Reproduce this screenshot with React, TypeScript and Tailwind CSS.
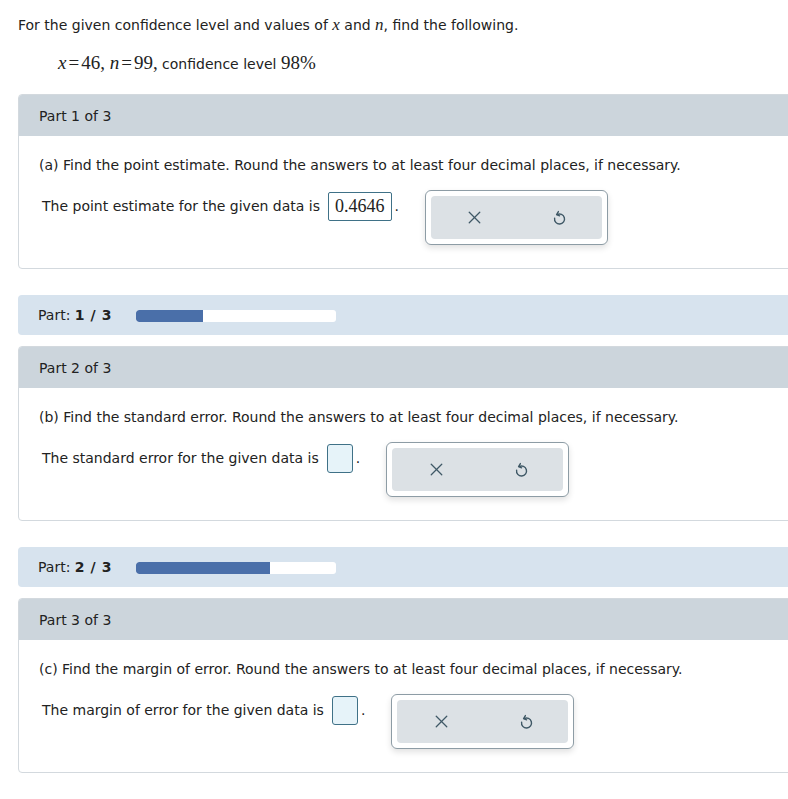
import { X } from "lucide-react";

const parts = [
  {
    n: 1,
    question: "(a) Find the point estimate. Round the answers to at least four decimal places, if necessary.",
    label: "The point estimate for the given data is",
    value: "0.4646",
  },
  {
    n: 2,
    question: "(b) Find the standard error. Round the answers to at least four decimal places, if necessary.",
    label: "The standard error for the given data is",
    value: "",
  },
  {
    n: 3,
    question: "(c) Find the margin of error. Round the answers to at least four decimal places, if necessary.",
    label: "The margin of error for the given data is",
    value: "",
  },
];

function UndoIcon() {
  return (
    <svg width="14" height="16" viewBox="0 0 14 16" fill="none" stroke="#3f5866" strokeWidth="1.4" strokeLinecap="round" strokeLinejoin="round">
      <path d="M5.2 4.6 A5 5 0 1 1 2.6 8.2" />
      <path d="M6.4 1.6 L4.6 4.6 L7.6 5.8" />
    </svg>
  );
}

function ActionBox() {
  return (
    <div className="ml-[26px] -mt-[2px] w-[183px] h-[55px] rounded-[6px] border border-[#8d9ca5] bg-white p-[5px] shadow-[0_3px_6px_rgba(0,0,0,0.12)]">
      <div className="flex h-full items-center rounded-[4px] bg-[#dce1e5]">
        <div className="flex w-[86px] justify-center pl-[2px]">
          <X className="h-[21px] w-[21px] text-[#3f5866]" strokeWidth={1.5} />
        </div>
        <div className="flex flex-1 justify-center">
          <UndoIcon />
        </div>
      </div>
    </div>
  );
}

function PartCard({ part }: { part: (typeof parts)[number] }) {
  return (
    <div className="w-[800px] overflow-hidden rounded-[4px] border border-[#d3d9de] bg-white">
      <div className="flex h-[41px] items-center bg-[#ccd5dc] pl-5 pt-[1px]">Part {part.n} of 3</div>
      <div className="pl-5 pt-[19px] pb-[23px]">
        <p className="leading-5">{part.question}</p>
        <div className="mt-[17px] ml-[3px] flex items-start">
          <div className="flex h-[29px] items-center">
            <span>{part.label}</span>
            {part.value ? (
              <span className="ml-[8px] flex h-[29px] items-center rounded-[2px] border border-[#3f7187] px-[6px] font-['Liberation_Serif',serif] text-[18px]">
                {part.value}
              </span>
            ) : (
              <span className="ml-[8px] h-[29px] w-[26px] rounded-[3px] border border-[#3f7187] bg-[#e6f3f9]" />
            )}
            <span className="ml-[3px]">.</span>
          </div>
          <ActionBox />
        </div>
      </div>
    </div>
  );
}

function Progress({ n }: { n: number }) {
  return (
    <div className="flex h-10 w-[800px] items-center rounded-[4px] bg-[#d7e3ee] pl-5 pt-[1px]">
      <span>
        Part:{" "}
        <b>
          {n}
          <span className="mx-[6px]">/</span>3
        </b>
      </span>
      <div className="ml-[25px] h-3 w-[200px] overflow-hidden rounded-[3px] bg-white">
        <div className="h-full rounded-l-[3px] bg-[#4a6fa9]" style={{ width: `${(n / 3) * 200}px` }} />
      </div>
    </div>
  );
}

export default function App() {
  return (
    <div className="w-[788px] h-[799px] overflow-hidden bg-white font-['DejaVu_Sans',Verdana,sans-serif] text-[14px] text-[#222]">
      <div className="pl-[18px] pt-[15px]">
        <p className="leading-5">
          For the given confidence level and values of{" "}
          <i className="font-['Liberation_Serif',serif] text-[17px]">x</i> and{" "}
          <i className="font-['Liberation_Serif',serif] text-[17px]">n</i>, find the following.
        </p>
        <p className="mt-[18px] ml-[40px] leading-5">
          <span className="font-['Liberation_Serif',serif] text-[19px]">
            <i>x</i>
            <span className="mx-[2px]">=</span>46, <i>n</i>
            <span className="mx-[2px]">=</span>99,
          </span>{" "}
          confidence level <span className="font-['Liberation_Serif',serif] text-[19px]">98%</span>
        </p>
        <div className="mt-[20px] flex flex-col">
          <PartCard part={parts[0]} />
          <div className="mt-[26px]"><Progress n={1} /></div>
          <div className="mt-[11px]"><PartCard part={parts[1]} /></div>
          <div className="mt-[26px]"><Progress n={2} /></div>
          <div className="mt-[11px]"><PartCard part={parts[2]} /></div>
        </div>
      </div>
    </div>
  );
}
